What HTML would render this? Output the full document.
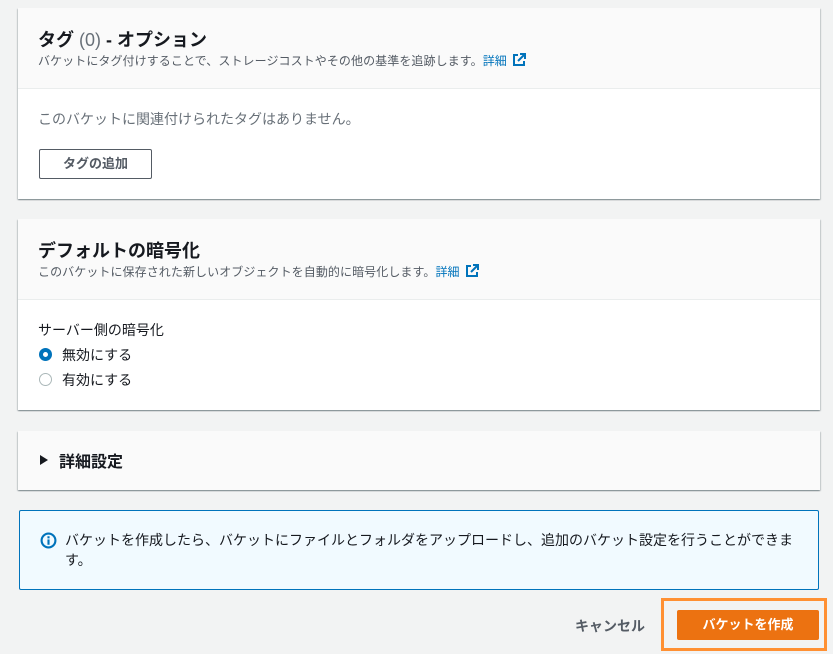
<!DOCTYPE html>
<html><head><meta charset="utf-8"><style>
*{margin:0;padding:0;box-sizing:border-box}
body{width:833px;height:654px;background:#f2f3f3;font-family:"Liberation Sans","Noto Sans CJK JP",sans-serif;color:#16191f;position:relative;overflow:hidden}
.card{position:absolute;left:18px;width:802px;background:#fff;box-shadow:0 1px 1px 0 rgba(0,28,36,.3),1px 1px 1px 0 rgba(0,28,36,.15),-1px 1px 1px 0 rgba(0,28,36,.15)}
.hd{background:#fafafa;border-bottom:1px solid #eaeded;padding:0 20px;position:relative}
.t{font-size:18px;font-weight:bold;position:absolute;left:20px}
.s{font-size:12px;letter-spacing:0.08px;color:#545b64;position:absolute;left:20px}
.a{color:#0073bb}
.ext{display:inline-block;width:14px;height:14px;vertical-align:-2px;margin-left:5px}
.abs{position:absolute}
</style></head><body>
<div class="card" style="top:8px;height:191px">
 <div class="hd" style="height:81px">
  <div class="t" style="top:18px">タグ <span style="font-weight:normal;color:#687078">(0)</span> - オプション</div>
  <div class="s" style="top:44px">バケットにタグ付けすることで、ストレージコストやその他の基準を追跡します。<span class="a">詳細</span><svg class="ext" viewBox="0 0 14 14"><path d="M6 2H2v10h10V8" fill="none" stroke="#0073bb" stroke-width="2"/><path d="M8 1h5v5M13 1L6 8" fill="none" stroke="#0073bb" stroke-width="2"/></svg></div>
 </div>
 <div class="abs" style="left:20px;top:101px;font-size:14px;color:#687078">このバケットに関連付けられたタグはありません。</div>
 <div class="abs" style="left:21px;top:141px;width:113px;height:30px;border:1px solid #545b64;border-radius:2px;font-size:13px;font-weight:bold;color:#545b64;text-align:center;line-height:28px">タグの追加</div>
</div>
<div class="card" style="top:219px;height:191px">
 <div class="hd" style="height:81px">
  <div class="t" style="top:18px">デフォルトの暗号化</div>
  <div class="s" style="top:44px">このバケットに保存された新しいオブジェクトを自動的に暗号化します。<span class="a">詳細</span><svg class="ext" viewBox="0 0 14 14"><path d="M6 2H2v10h10V8" fill="none" stroke="#0073bb" stroke-width="2"/><path d="M8 1h5v5M13 1L6 8" fill="none" stroke="#0073bb" stroke-width="2"/></svg></div>
 </div>
 <div class="abs" style="left:20px;top:101px;font-size:14px">サーバー側の暗号化</div>
 <div class="abs" style="left:21px;top:129px;width:13px;height:13px;border-radius:50%;border:4px solid #0073bb"></div>
 <div class="abs" style="left:44px;top:126px;font-size:14px">無効にする</div>
 <div class="abs" style="left:21px;top:154px;width:13px;height:13px;border-radius:50%;border:1px solid #aab7b8"></div>
 <div class="abs" style="left:44px;top:151px;font-size:14px">有効にする</div>
</div>
<div class="card" style="top:431px;height:59px;background:#fafafa">
 <div class="abs" style="left:22px;top:24px;width:0;height:0;border-left:8px solid #16191f;border-top:5px solid transparent;border-bottom:5px solid transparent"></div>
 <div class="abs" style="left:41px;top:17px;font-size:16px;font-weight:bold">詳細設定</div>
</div>
<div class="abs" style="left:19px;top:510px;width:800px;height:80px;background:#f1faff;border:1px solid #0073bb;border-radius:2px">
 <svg class="abs" style="left:20px;top:21px" width="17" height="17" viewBox="0 0 16 16"><circle cx="8" cy="8" r="6.5" fill="none" stroke="#0073bb" stroke-width="2"/><rect x="7" y="7" width="2" height="5" fill="#0073bb"/><rect x="7" y="4" width="2" height="2" fill="#0073bb"/></svg>
 <div class="abs" style="left:45px;top:19px;width:740px;font-size:14px;line-height:20px">バケットを作成したら、バケットにファイルとフォルダをアップロードし、追加のバケット設定を行うことができます。</div>
</div>
<div class="abs" style="left:575px;top:616px;font-size:14px;font-weight:bold;color:#545b64">キャンセル</div>
<div class="abs" style="left:661px;top:598px;width:166px;height:53px;border:3px solid #ff9033"></div>
<div class="abs" style="left:677px;top:610px;width:142px;height:30px;background:#ec7211;border-radius:2px;color:#fff;font-size:13px;font-weight:bold;text-align:center;line-height:30px">バケットを作成</div>
</body></html>
